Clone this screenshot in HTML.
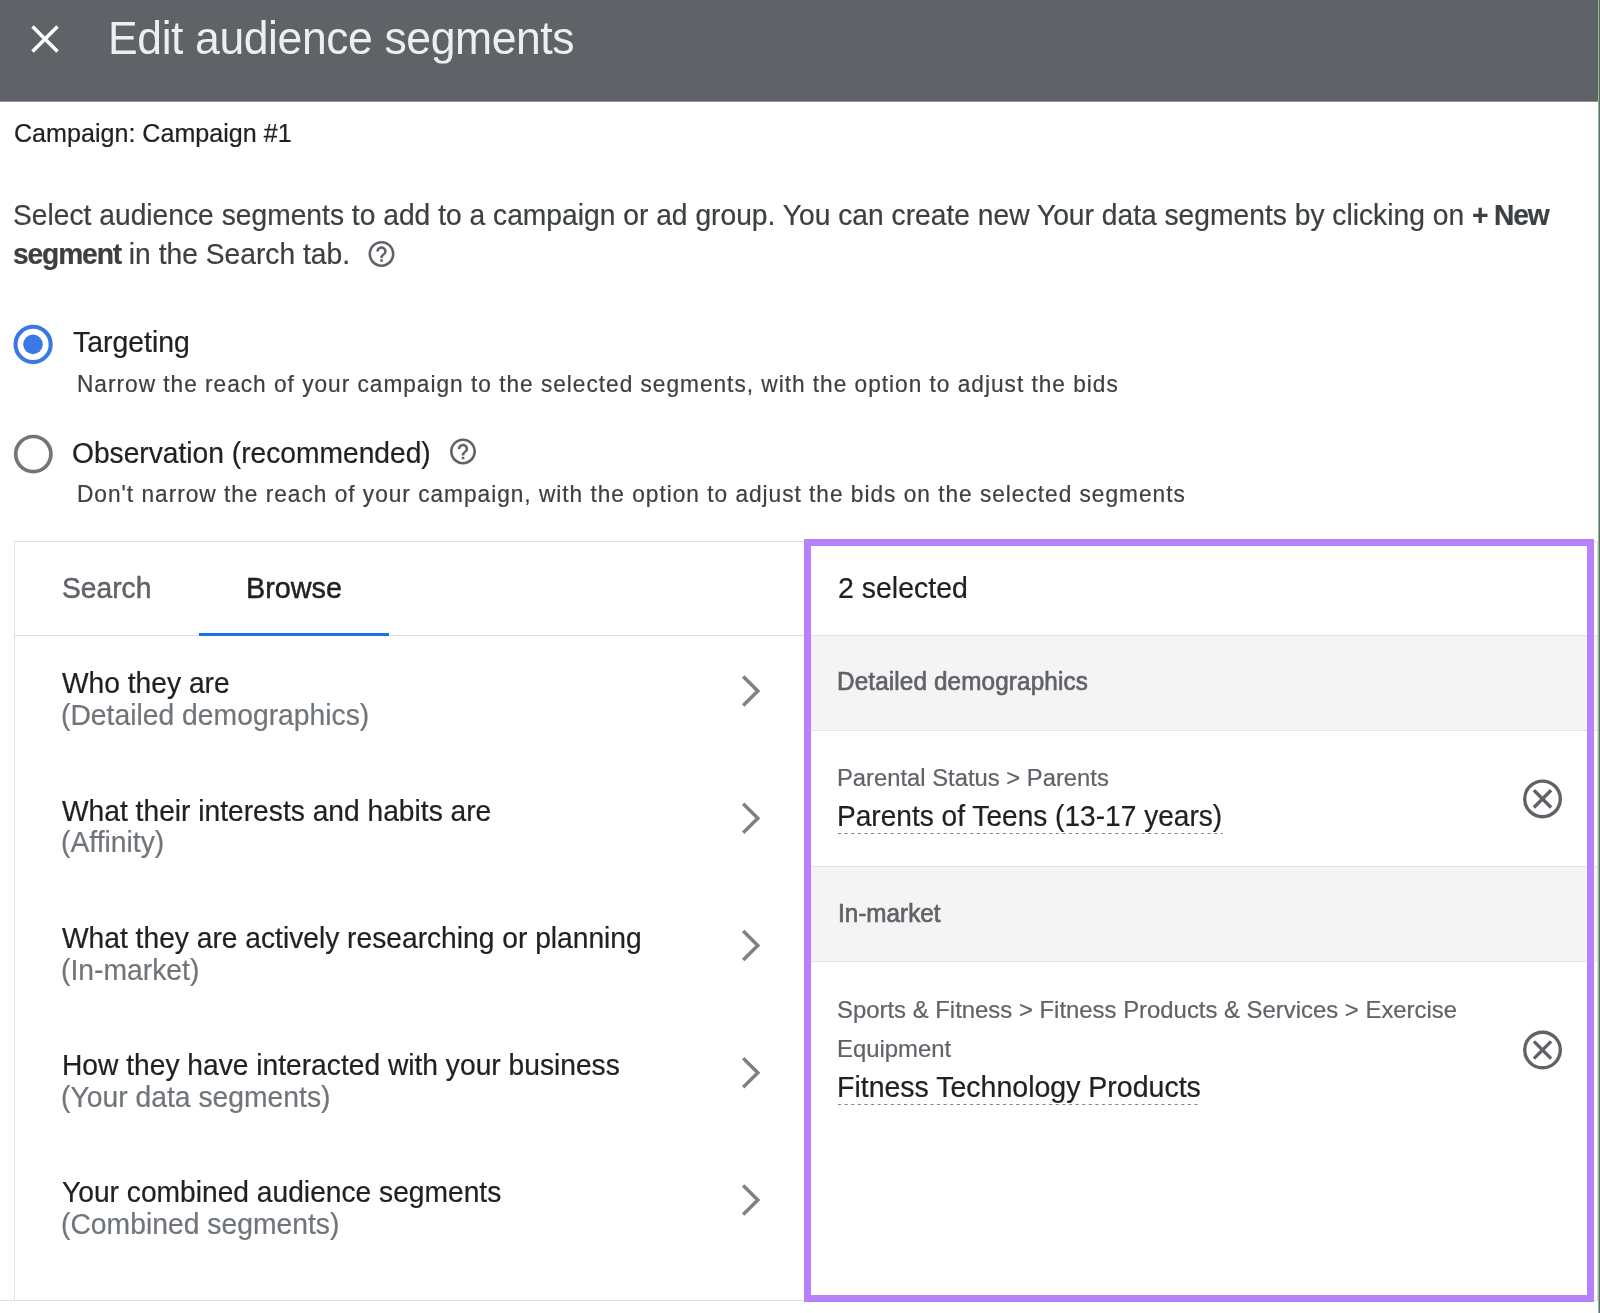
<!DOCTYPE html>
<html><head><meta charset="utf-8">
<style>
html,body{margin:0;padding:0;}
body{width:1600px;height:1313px;position:relative;overflow:hidden;background:#fff;font-family:"Liberation Sans", sans-serif;}
.t{position:absolute;white-space:nowrap;will-change:transform;-webkit-text-stroke:0.2px currentColor;}
.t b{font-weight:700;letter-spacing:-1.15px;}
.box{position:absolute;box-sizing:border-box;}
.ov{position:absolute;left:0;top:0;}
</style></head><body>
<div class="box" style="left:0;top:0;width:1598px;height:101px;background:#5f6368;"></div><div class="box" style="left:0;top:101px;width:1598px;height:1px;background:#8e9194;"></div>
<div class="box" style="left:1599px;top:0;width:1px;height:1313px;background:#4a7a4e;"></div><div class="box" style="left:1598px;top:0;width:1px;height:1313px;background:rgba(120,120,125,0.62);"></div>
<!-- left panel -->
<div class="box" style="left:14px;top:541px;width:1584px;height:760px;border:1px solid #e0e0e0;border-right:none;border-bottom:none;"></div>
<div class="box" style="left:15px;top:635px;width:790px;height:1px;background:#e0e0e0;"></div>
<div class="box" style="left:199px;top:633px;width:190px;height:3px;background:#1a73e8;"></div>
<!-- right sections -->
<div class="box" style="left:811px;top:635px;width:786px;height:96px;background:#f4f4f4;border-top:1px solid #e3e3e3;border-bottom:1px solid #e6e6e6;"></div>
<div class="box" style="left:811px;top:866px;width:786px;height:96px;background:#f4f4f4;border-top:1px solid #e3e3e3;border-bottom:1px solid #e6e6e6;"></div>


<div class="box" style="left:0;top:1300px;width:1598px;height:1px;background:#e0e0e0;"></div><div class="box" style="left:1597px;top:541px;width:1px;height:760px;background:#dadce0;"></div>
<!-- purple highlight -->
<div class="box" style="left:804px;top:539px;width:790px;height:763px;border:7px solid #b780fd;"></div>
<div class="t" style="left:107.5px;top:17.11px;font-size:44.5px;line-height:44.5px;color:#eceef0;font-weight:400;letter-spacing:-0.4px;transform:scaleY(1.035);transform-origin:0 37.69px;-webkit-text-stroke:0;">Edit audience segments</div><div class="t" style="left:13.5px;top:121.04px;font-size:25.1px;line-height:25.1px;color:#202124;font-weight:400;letter-spacing:0px;transform:scaleY(1.035);transform-origin:0 21.26px;">Campaign: Campaign #1</div><div class="t" style="left:13px;top:200.80px;font-size:28.22px;line-height:28.22px;color:#3c4043;font-weight:400;letter-spacing:0px;transform:scaleY(1.035);transform-origin:0 23.90px;">Select audience segments to add to a campaign or ad group. You can create new Your data segments by clicking on <b>+ New</b></div><div class="t" style="left:13px;top:240.30px;font-size:28.22px;line-height:28.22px;color:#3c4043;font-weight:400;letter-spacing:0px;transform:scaleY(1.035);transform-origin:0 23.90px;"><b>segment</b> in the Search tab.</div><div class="t" style="left:73px;top:328.05px;font-size:28.4px;line-height:28.4px;color:#202124;font-weight:400;letter-spacing:0px;transform:scaleY(1.035);transform-origin:0 24.05px;">Targeting</div><div class="t" style="left:77px;top:372.97px;font-size:22.7px;line-height:22.7px;color:#3c4043;font-weight:400;letter-spacing:0.98px;transform:scaleY(1.035);transform-origin:0 19.23px;">Narrow the reach of your campaign to the selected segments, with the option to adjust the bids</div><div class="t" style="left:72.3px;top:438.61px;font-size:28.2px;line-height:28.2px;color:#202124;font-weight:400;letter-spacing:0px;transform:scaleY(1.035);transform-origin:0 23.89px;">Observation (recommended)</div><div class="t" style="left:76.5px;top:482.97px;font-size:22.7px;line-height:22.7px;color:#3c4043;font-weight:400;letter-spacing:0.98px;transform:scaleY(1.035);transform-origin:0 19.23px;">Don't narrow the reach of your campaign, with the option to adjust the bids on the selected segments</div><div class="t" style="left:61.5px;top:573.71px;font-size:28.2px;line-height:28.2px;color:#5f6368;font-weight:400;letter-spacing:0px;transform:scaleY(1.035);transform-origin:0 23.89px;-webkit-text-stroke:0.45px currentColor;">Search</div><div class="t" style="left:245.5px;top:573.81px;font-size:28.8px;line-height:28.8px;color:#202124;font-weight:400;letter-spacing:0px;transform:scaleY(1.035);transform-origin:0 24.39px;-webkit-text-stroke:0.45px currentColor;">Browse</div><div class="t" style="left:61.5px;top:669.31px;font-size:28.2px;line-height:28.2px;color:#202124;font-weight:400;letter-spacing:0px;transform:scaleY(1.035);transform-origin:0 23.89px;">Who they are</div><div class="t" style="left:61.3px;top:701.23px;font-size:28.3px;line-height:28.3px;color:#70757a;font-weight:400;letter-spacing:0px;transform:scaleY(1.035);transform-origin:0 23.97px;">(Detailed demographics)</div><div class="t" style="left:61.5px;top:796.56px;font-size:28.2px;line-height:28.2px;color:#202124;font-weight:400;letter-spacing:0px;transform:scaleY(1.035);transform-origin:0 23.89px;">What their interests and habits are</div><div class="t" style="left:61.3px;top:828.48px;font-size:28.3px;line-height:28.3px;color:#70757a;font-weight:400;letter-spacing:0px;transform:scaleY(1.035);transform-origin:0 23.97px;">(Affinity)</div><div class="t" style="left:61.5px;top:923.81px;font-size:28.2px;line-height:28.2px;color:#202124;font-weight:400;letter-spacing:0px;transform:scaleY(1.035);transform-origin:0 23.89px;">What they are actively researching or planning</div><div class="t" style="left:61.3px;top:955.73px;font-size:28.3px;line-height:28.3px;color:#70757a;font-weight:400;letter-spacing:0px;transform:scaleY(1.035);transform-origin:0 23.97px;">(In-market)</div><div class="t" style="left:61.5px;top:1051.06px;font-size:28.2px;line-height:28.2px;color:#202124;font-weight:400;letter-spacing:0px;transform:scaleY(1.035);transform-origin:0 23.89px;">How they have interacted with your business</div><div class="t" style="left:61.3px;top:1082.98px;font-size:28.3px;line-height:28.3px;color:#70757a;font-weight:400;letter-spacing:0px;transform:scaleY(1.035);transform-origin:0 23.97px;">(Your data segments)</div><div class="t" style="left:61.5px;top:1178.31px;font-size:28.2px;line-height:28.2px;color:#202124;font-weight:400;letter-spacing:0px;transform:scaleY(1.035);transform-origin:0 23.89px;">Your combined audience segments</div><div class="t" style="left:61.3px;top:1210.23px;font-size:28.3px;line-height:28.3px;color:#70757a;font-weight:400;letter-spacing:0px;transform:scaleY(1.035);transform-origin:0 23.97px;">(Combined segments)</div><div class="t" style="left:837.8px;top:573.86px;font-size:28.5px;line-height:28.5px;color:#202124;font-weight:400;letter-spacing:0px;transform:scaleY(1.035);transform-origin:0 24.14px;">2 selected</div><div class="t" style="left:837.3px;top:670.02px;font-size:24.3px;line-height:24.3px;color:#5f6368;font-weight:400;letter-spacing:0.12px;transform:scaleY(1.035);transform-origin:0 20.58px;-webkit-text-stroke:0.65px currentColor;">Detailed demographics</div><div class="t" style="left:837px;top:765.84px;font-size:23.8px;line-height:23.8px;color:#5f6368;font-weight:400;letter-spacing:0px;transform:scaleY(1.035);transform-origin:0 20.16px;">Parental Status &gt; Parents</div><div class="t" style="left:837px;top:802.60px;font-size:28.1px;line-height:28.1px;color:#202124;font-weight:400;letter-spacing:0px;transform:scaleY(1.035);transform-origin:0 23.80px;">Parents of Teens (13-17 years)</div><div class="t" style="left:837.8px;top:901.62px;font-size:24.3px;line-height:24.3px;color:#5f6368;font-weight:400;letter-spacing:0px;transform:scaleY(1.035);transform-origin:0 20.58px;-webkit-text-stroke:0.65px currentColor;">In-market</div><div class="t" style="left:837px;top:997.76px;font-size:23.9px;line-height:23.9px;color:#5f6368;font-weight:400;letter-spacing:0px;transform:scaleY(1.035);transform-origin:0 20.24px;">Sports &amp; Fitness &gt; Fitness Products &amp; Services &gt; Exercise</div><div class="t" style="left:837px;top:1036.96px;font-size:23.9px;line-height:23.9px;color:#5f6368;font-weight:400;letter-spacing:0px;transform:scaleY(1.035);transform-origin:0 20.24px;">Equipment</div><div class="t" style="left:836.8px;top:1073.36px;font-size:28.5px;line-height:28.5px;color:#202124;font-weight:400;letter-spacing:0px;transform:scaleY(1.035);transform-origin:0 24.14px;">Fitness Technology Products</div>
<svg class="ov" width="1600" height="1313" viewBox="0 0 1600 1313">
<!-- header X -->
<path d="M32.5,26.5 L57.5,51.5 M57.5,26.5 L32.5,51.5" stroke="#ffffff" stroke-width="3.6"/>
<g transform="translate(365.90,238.40) scale(1.3)"><path fill="#5f6368" d="M11 18h2v-2h-2v2zm1-16C6.48 2 2 6.48 2 12s4.48 10 10 10 10-4.48 10-10S17.52 2 12 2zm0 18c-4.41 0-8-3.59-8-8s3.59-8 8-8 8 3.59 8 8-3.59 8-8 8zm0-14c-2.21 0-4 1.79-4 4h2c0-1.1.9-2 2-2s2 .9 2 2c0 2-3 1.75-3 5h2c0-2.25 3-2.5 3-5 0-2.21-1.79-4-4-4z"/></g>
<g transform="translate(447.40,435.90) scale(1.3)"><path fill="#5f6368" d="M11 18h2v-2h-2v2zm1-16C6.48 2 2 6.48 2 12s4.48 10 10 10 10-4.48 10-10S17.52 2 12 2zm0 18c-4.41 0-8-3.59-8-8s3.59-8 8-8 8 3.59 8 8-3.59 8-8 8zm0-14c-2.21 0-4 1.79-4 4h2c0-1.1.9-2 2-2s2 .9 2 2c0 2-3 1.75-3 5h2c0-2.25 3-2.5 3-5 0-2.21-1.79-4-4-4z"/></g>
<!-- radios -->
<circle cx="33.1" cy="344.4" r="17.6" fill="none" stroke="#3b78e7" stroke-width="4.1"/>
<circle cx="33" cy="344.4" r="9.8" fill="#3b78e7"/>
<circle cx="33.3" cy="454.1" r="17.6" fill="none" stroke="#757575" stroke-width="3.7"/>
<polyline points="743.2,676.50 757.8,691.00 743.2,705.50" fill="none" stroke="#7d8085" stroke-width="3.5"/><polyline points="743.2,803.75 757.8,818.25 743.2,832.75" fill="none" stroke="#7d8085" stroke-width="3.5"/><polyline points="743.2,931.00 757.8,945.50 743.2,960.00" fill="none" stroke="#7d8085" stroke-width="3.5"/><polyline points="743.2,1058.25 757.8,1072.75 743.2,1087.25" fill="none" stroke="#7d8085" stroke-width="3.5"/><polyline points="743.2,1185.50 757.8,1200.00 743.2,1214.50" fill="none" stroke="#7d8085" stroke-width="3.5"/>
<circle cx="1542.5" cy="798.9" r="17.8" fill="none" stroke="#5f6368" stroke-width="3.4"/><path d="M1533.9,790.3 L1551.1,807.5 M1551.1,790.3 L1533.9,807.5" stroke="#5f6368" stroke-width="3.4"/>
<circle cx="1542.5" cy="1050" r="17.8" fill="none" stroke="#5f6368" stroke-width="3.4"/><path d="M1533.9,1041.4 L1551.1,1058.6 M1551.1,1041.4 L1533.9,1058.6" stroke="#5f6368" stroke-width="3.4"/>
<line x1="838" y1="833.5" x2="1223" y2="833.5" stroke="#80868b" stroke-width="1" stroke-dasharray="3.1 3.5"/>
<line x1="838" y1="1104.5" x2="1201" y2="1104.5" stroke="#80868b" stroke-width="1" stroke-dasharray="3.1 3.5"/>
</svg>
</body></html>
